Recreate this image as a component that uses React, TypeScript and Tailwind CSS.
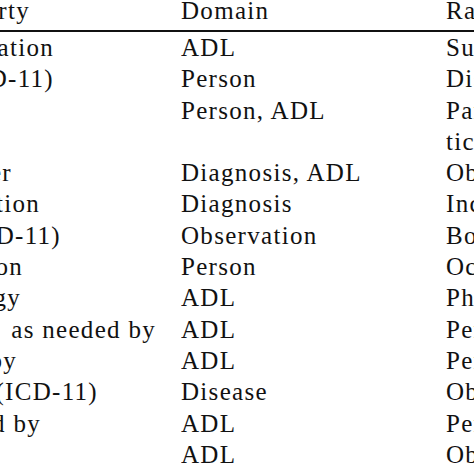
const rows = [
  { prop: "Mobility limitation", pad: "pr-[127px]", domain: "ADL", range: "Subjective" },
  { prop: "Disease (ICD-11)", pad: "pr-[127px]", domain: "Person", range: "Disability" },
  { prop: "", pad: "", domain: "Person, ADL", range: "Participa-" },
  { prop: "", pad: "", domain: "", range: "tics" },
  { prop: "Caregiver", pad: "pr-[169px]", domain: "Diagnosis, ADL", range: "Observation" },
  { prop: "Medication", pad: "pr-[141px]", domain: "Diagnosis", range: "Incidence" },
  { prop: "Symptom (ICD-11)", pad: "pr-[120px]", domain: "Observation", range: "Body" },
  { prop: "Occupation", pad: "pr-[158px]", domain: "Person", range: "Occupation" },
  { prop: "Assistive technology", pad: "pr-[160px]", domain: "ADL", range: "Physical" },
  { prop: "Support\u00a0\u00a0 as needed by", pad: "pr-[25px]", domain: "ADL", range: "Person" },
  { prop: "Help provided by", pad: "pr-[164px]", domain: "ADL", range: "Person" },
  { prop: "Comorbidity (ICD-11)", pad: "pr-[83px]", domain: "Disease", range: "Observation" },
  { prop: "Care received by", pad: "pr-[140px]", domain: "ADL", range: "Person" },
  { prop: "", pad: "", domain: "ADL", range: "Observation" },
];

export default function App() {
  return (
    <div className="w-[474px] h-[474px] overflow-hidden bg-white text-[#111] font-['Liberation_Serif',serif] text-[25px] tracking-[1.3px]">
      {/* header */}
      <div className="grid grid-cols-[181px_265px_1fr] h-[32px] leading-[22px] border-b-[2px] border-[#111]">
        <div className="flex justify-end overflow-hidden whitespace-nowrap pr-[151px]">Property</div>
        <div className="whitespace-nowrap overflow-hidden">Domain</div>
        <div className="whitespace-nowrap overflow-hidden">Range</div>
      </div>

      {/* body */}
      <div className="flex flex-col">
        {rows.map((r, i) => (
          <div key={i} className="grid grid-cols-[181px_265px_1fr] h-[31.3px] leading-[31.3px]">
            <div className={`flex justify-end overflow-hidden whitespace-nowrap ${r.pad}`}>{r.prop}</div>
            <div className="whitespace-nowrap overflow-hidden">{r.domain}</div>
            <div className="whitespace-nowrap overflow-hidden">{r.range}</div>
          </div>
        ))}
      </div>
    </div>
  );
}
